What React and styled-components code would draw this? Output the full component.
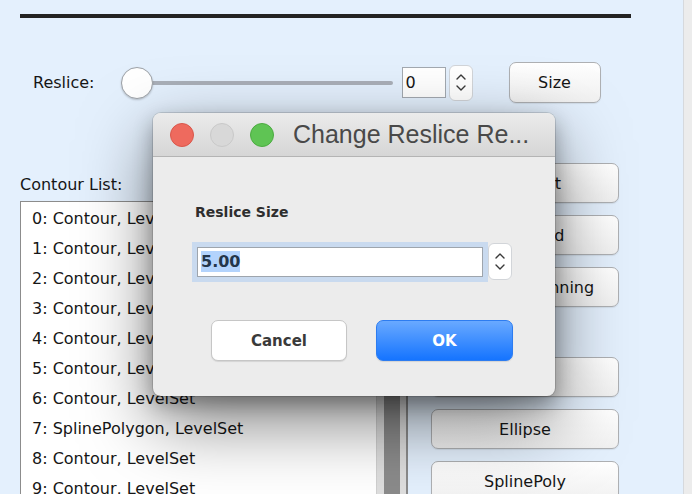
import styled, { createGlobalStyle } from "styled-components";

const GlobalStyle = createGlobalStyle`
  html, body {
    margin: 0;
    padding: 0;
    background: #e4f0fd;
  }
`;

const Window = styled.div`
  position: relative;
  display: flex;
  width: 692px;
  height: 494px;
  overflow: hidden;
  font-family: "DejaVu Sans", Verdana, sans-serif;
  color: #161616;
`;

const Main = styled.div`
  flex: 1;
  background: #e4f0fd;
  padding: 14px 0 0 20px;
`;

const WindowEdge = styled.div`
  width: 8px;
  background: #ececec;
  border-left: 1px solid #d6d9dd;
`;

const Divider = styled.div`
  width: 611px;
  height: 4px;
  background: #232323;
`;

const ResliceRow = styled.div`
  display: flex;
  align-items: center;
  height: 41px;
  margin-top: 44px;
  padding-left: 13px;
`;

const Label = styled.span`
  font-size: 16px;
  line-height: 20px;
  white-space: nowrap;
`;

const Slider = styled.div`
  position: relative;
  width: 272px;
  height: 32px;
  margin-left: 26px;
  display: flex;
  align-items: center;
`;

const Track = styled.div`
  flex: 1;
  height: 4px;
  border-radius: 2px;
  background: #a9afb8;
`;

const Thumb = styled.div`
  position: absolute;
  left: 0;
  top: 0;
  width: 30px;
  height: 30px;
  border-radius: 50%;
  background: #fff;
  border: 1px solid #9ea3a9;
  box-shadow: 0 1px 2px rgba(0, 0, 0, 0.2);
`;

const NumberField = styled.div`
  box-sizing: border-box;
  width: ${(p) => p.width}px;
  height: ${(p) => p.height}px;
  margin-left: ${(p) => p.gap || 0}px;
  background: #fff;
  border: 1px solid #a3a9b0;
  font-size: 16px;
  line-height: ${(p) => p.height - 2}px;
  padding-left: 3px;
`;

const Stepper = styled.div`
  box-sizing: border-box;
  width: 24px;
  height: ${(p) => p.height}px;
  margin-left: ${(p) => p.gap}px;
  background: #fff;
  border: 1px solid #d2d5d9;
  border-radius: 6px;
  display: flex;
  flex-direction: column;
  align-items: center;
  justify-content: center;
  gap: 5px;
`;

const Chevron = ({ up }) => (
  <svg width="10" height="6" viewBox="0 0 10 6">
    <path
      d={up ? "M1 5 L5 1 L9 5" : "M1 1 L5 5 L9 1"}
      fill="none"
      stroke="#3a3a3a"
      strokeWidth="1.4"
      strokeLinecap="round"
      strokeLinejoin="round"
    />
  </svg>
);

const PushButton = styled.div`
  box-sizing: border-box;
  width: ${(p) => p.width}px;
  height: ${(p) => p.height}px;
  margin-left: ${(p) => p.gap || 0}px;
  flex-shrink: 0;
  display: flex;
  align-items: center;
  justify-content: center;
  background: linear-gradient(#ffffff, #f1f1f1);
  border: 1px solid #aeb0b3;
  border-radius: 7px;
  box-shadow: 0 1px 1px rgba(0, 0, 0, 0.08);
  font-size: 16px;
  white-space: nowrap;
  overflow: hidden;
`;

const Content = styled.div`
  display: flex;
  margin-top: 60px;
`;

const ListColumn = styled.div`
  width: 388px;
  padding-top: 12px;
`;

const ListBox = styled.div`
  display: flex;
  height: 320px;
  margin-top: 6px;
  background: #fff;
  border: 1px solid #8c8c8c;
  border-right-width: 2px;
`;

const Items = styled.div`
  flex: 1;
  padding: 2px 0 0 11px;
`;

const Item = styled.div`
  font-size: 16px;
  line-height: 30px;
  white-space: nowrap;
`;

const Scrollbar = styled.div`
  width: 29px;
  background: #dedede;
  border-left: 1px solid #d0d0d0;
  display: flex;
  justify-content: center;
  padding-top: 40px;
`;

const ScrollThumb = styled.div`
  width: 16px;
  height: 100%;
  background: #8b8b8b;
`;

const ButtonColumn = styled.div`
  display: flex;
  flex-direction: column;
  gap: 12px;
  margin-left: 23px;
`;

const Spacer = styled.div`
  height: 26px;
`;

/* the modal sheet sits on top of the window */
const Dialog = styled.div`
  position: absolute;
  left: 153px;
  top: 113px;
  width: 402px;
  height: 283px;
  border-radius: 8px;
  overflow: hidden;
  background: #ececec;
  box-shadow: 0 0 0 1px rgba(0, 0, 0, 0.12), 0 8px 20px rgba(0, 0, 0, 0.3),
    0 26px 70px rgba(0, 0, 0, 0.5);
  display: flex;
  flex-direction: column;
`;

const TitleBar = styled.div`
  display: flex;
  align-items: center;
  height: 43px;
  padding-left: 17px;
  background: linear-gradient(#ebebeb, #d6d6d6);
  border-bottom: 1px solid #b4b4b4;
`;

const Light = styled.div`
  width: 24px;
  height: 24px;
  border-radius: 50%;
  margin-right: 16px;
  box-sizing: border-box;
  background: ${(p) => p.color};
  border: 1px solid ${(p) => p.rim};
`;

const Title = styled.div`
  margin-left: 3px;
  font-family: "Liberation Sans", Arial, sans-serif;
  font-size: 25px;
  color: #494949;
  white-space: nowrap;
`;

const DialogBody = styled.div`
  display: flex;
  flex-direction: column;
  padding: 46px 0 0 42px;
`;

const FieldLabel = styled.div`
  font-size: 14px;
  font-weight: bold;
  line-height: 18px;
  color: #2e2e2e;
`;

const FieldRow = styled.div`
  display: flex;
  align-items: center;
  margin-top: 22px;
  padding-left: 2px;
`;

const SizeInput = styled.div`
  box-sizing: border-box;
  width: 286px;
  height: 30px;
  background: #fff;
  border: 1px solid #9ea5ad;
  box-shadow: 0 0 0 5px #c9daef;
  display: flex;
  align-items: center;
  padding-left: 3px;
`;

const Selected = styled.span`
  background: #b3d3fc;
  font-size: 16px;
  font-weight: bold;
  line-height: 21px;
  color: #24364a;
`;

const DialogButtons = styled.div`
  display: flex;
  gap: 29px;
  margin-top: 40px;
  padding-left: 16px;
`;

const DialogButton = styled.div`
  box-sizing: border-box;
  width: ${(p) => (p.primary ? 137 : 136)}px;
  height: 41px;
  display: flex;
  align-items: center;
  justify-content: center;
  border-radius: 7px;
  font-size: 15px;
  font-weight: bold;
  color: ${(p) => (p.primary ? "#fff" : "#3a3a3a")};
  background: ${(p) =>
    p.primary ? "linear-gradient(#69a9ff, #1574ff)" : "#fff"};
  border: 1px solid ${(p) => (p.primary ? "#2d7cf0" : "#c6c6c6")};
  box-shadow: 0 1px 1px rgba(0, 0, 0, 0.1);
`;

const contours = [
  "0: Contour, LevelSet",
  "1: Contour, LevelSet",
  "2: Contour, LevelSet",
  "3: Contour, LevelSet",
  "4: Contour, LevelSet",
  "5: Contour, LevelSet",
  "6: Contour, LevelSet",
  "7: SplinePolygon, LevelSet",
  "8: Contour, LevelSet",
  "9: Contour, LevelSet",
  "10: Contour, LevelSet",
];

export default function App() {
  return (
    <>
      <GlobalStyle />
      <Window>
        <Main>
          <Divider />
          <ResliceRow>
            <Label>Reslice:</Label>
            <Slider>
              <Track />
              <Thumb />
            </Slider>
            <NumberField width={44} height={31} gap={9}>
              0
            </NumberField>
            <Stepper height={36} gap={3}>
              <Chevron up />
              <Chevron />
            </Stepper>
            <PushButton width={92} height={41} gap={36}>
              Size
            </PushButton>
          </ResliceRow>
          <Content>
            <ListColumn>
              <Label>Contour List:</Label>
              <ListBox>
                <Items>
                  {contours.map((c) => (
                    <Item key={c}>{c}</Item>
                  ))}
                </Items>
                <Scrollbar>
                  <ScrollThumb />
                </Scrollbar>
              </ListBox>
            </ListColumn>
            <ButtonColumn>
              <PushButton width={188} height={40}>
                Segment
              </PushButton>
              <PushButton width={188} height={40}>
                Threshold
              </PushButton>
              <PushButton width={188} height={40}>
                Contour Thinning
              </PushButton>
              <Spacer />
              <PushButton width={188} height={40}>
                Circle
              </PushButton>
              <PushButton width={188} height={40}>
                Ellipse
              </PushButton>
              <PushButton width={188} height={40}>
                SplinePoly
              </PushButton>
            </ButtonColumn>
          </Content>
        </Main>
        <WindowEdge />
        <Dialog>
          <TitleBar>
            <Light color="#ee6a5e" rim="#d9574b" />
            <Light color="#d8d8d8" rim="#c9c9c9" />
            <Light color="#5fc454" rim="#4cab41" />
            <Title>Change Reslice Re...</Title>
          </TitleBar>
          <DialogBody>
            <FieldLabel>Reslice Size</FieldLabel>
            <FieldRow>
              <SizeInput>
                <Selected>5.00</Selected>
              </SizeInput>
              <Stepper height={37} gap={5}>
                <Chevron up />
                <Chevron />
              </Stepper>
            </FieldRow>
            <DialogButtons>
              <DialogButton>Cancel</DialogButton>
              <DialogButton primary>OK</DialogButton>
            </DialogButtons>
          </DialogBody>
        </Dialog>
      </Window>
    </>
  );
}
